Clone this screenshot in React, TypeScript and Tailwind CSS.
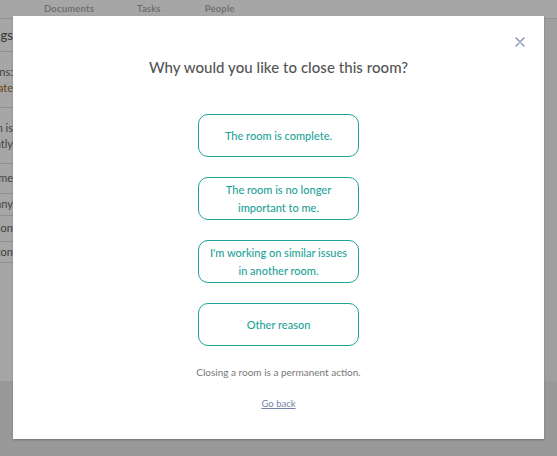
import React from "react";

export default function App() {
  return (
    <div className="relative w-[557px] h-[456px] overflow-hidden bg-[#f4f4f4]" style={{ fontFamily: "Lato, 'Open Sans', sans-serif" }}>
      {/* underlying page */}
      <div className="flex flex-col h-full">
        <div className="h-[19px] bg-white border-b border-[#e0e0e0] flex items-center text-[9.5px] text-[#a6a6a6] font-semibold tracking-[0.2px]">
          <span className="ml-[44px]">Documents</span>
          <span className="ml-[43px]">Tasks</span>
          <span className="ml-[44px]">People</span>
        </div>
        <div className="flex flex-1">
          <div className="w-[13px] bg-white overflow-hidden h-[362px]">
            <div className="w-[200px] ml-[-187px] text-right">
              <div className="h-[33px] flex items-end justify-end pb-[6px] text-[13px] text-[#555] border-b border-[#ddd]">Settings</div>
              <div className="h-[56px] flex flex-col justify-center items-end text-[11px] leading-[16px] border-b border-[#ddd]">
                <span className="text-[#666]">Visibility options:</span>
                <span className="text-[#a36a2a]">Update</span>
              </div>
              <div className="h-[56px] flex flex-col justify-center items-end text-[11px] leading-[16px] border-b border-[#ddd]">
                <span className="text-[#666]">This room is</span>
                <span className="text-[#666]">currently</span>
              </div>
              <div className="h-[30px] flex items-center justify-end text-[11px] text-[#666] border-b border-[#ddd]">Room name</div>
              <div className="h-[22px] flex items-center justify-end text-[11px] text-[#666] border-b border-[#ddd]">Company</div>
              <div className="h-[26px] flex items-center justify-end text-[11px] text-[#666] border-b border-[#ddd]">Description</div>
              <div className="h-[21px] flex items-center justify-end text-[11px] text-[#666] border-b border-[#ddd]">Room icon</div>
            </div>
          </div>
          <div className="flex-1" />
        </div>
        <div className="h-[75px] bg-[#ebebeb]" />
      </div>

      {/* overlay */}
      <div className="absolute inset-0 bg-black/35" />

      {/* modal */}
      <div className="absolute left-[13px] top-[16px] w-[531px] h-[423px] bg-white shadow-[0_1px_2px_rgba(0,0,0,0.25)] flex flex-col items-center">
        <button className="absolute right-[18px] top-[20px] w-[12px] h-[12px] flex items-center justify-center">
          <svg width="10" height="10" viewBox="0 0 10 10">
            <path d="M1 1L9 9M9 1L1 9" stroke="#7f8db0" strokeWidth="1.4" strokeLinecap="round" />
          </svg>
        </button>
        <h2 className="mt-[42px] text-[15px] leading-[18px] font-medium text-[#555] tracking-[0.05px]">
          Why would you like to close this room?
        </h2>
        <div className="mt-[38px] flex flex-col gap-[20px]">
          {["The room is complete.", "The room is no longer important to me.", "I'm working on similar issues in another room.", "Other reason"].map((t) => (
            <button
              key={t}
              className="w-[161px] h-[43px] rounded-[10px] border border-[#1ea399] text-[#1ea399] text-[11px] leading-[18px] font-medium px-[10px] flex items-center justify-center text-center"
            >
              {t}
            </button>
          ))}
        </div>
        <p className="mt-[20px] text-[10px] leading-[12px] text-[#777]">Closing a room is a permanent action.</p>
        <a className="mt-[20px] text-[9.5px] leading-[12px] text-[#7583a6] underline">Go back</a>
      </div>
    </div>
  );
}
